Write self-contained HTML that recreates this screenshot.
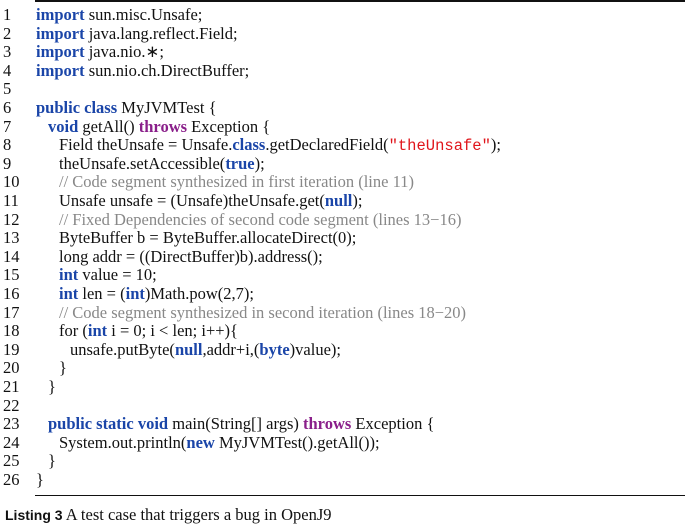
<!DOCTYPE html>
<html><head><meta charset="utf-8"><style>
body{margin:0;width:685px;height:523px;background:#fff;position:relative;overflow:hidden;font-family:"Liberation Serif",serif;font-size:16.5px;color:#111}
.t{position:absolute;left:35px;right:0;top:0;height:2px;background:#111}
.b{position:absolute;left:35px;right:0;top:495px;height:1.3px;background:#111}
.l{position:absolute;left:0;height:18.6px;line-height:18.6px;white-space:pre}
.n{position:absolute;left:3px}
.c{position:absolute;left:36px}
.i1{left:48px}.i2{left:59px}.i3{left:70px}
.k{color:#1a45a8;font-weight:bold}
.p{color:#8a1f8a;font-weight:bold}
.s{color:#e0151b;font-family:"Liberation Mono",monospace;font-size:15.5px}
.g{color:#888}
.cap{position:absolute;left:5px;top:505px;font-size:16.5px;line-height:19px}
.cap b{font-family:"Liberation Sans",sans-serif;font-size:14px;font-weight:bold}
</style></head><body>
<div class="t"></div>
<div class="l" style="top:6px"><span class="n">1</span><span class="c"><span class="k">import</span> sun.misc.Unsafe;</span></div>
<div class="l" style="top:24.6px"><span class="n">2</span><span class="c"><span class="k">import</span> java.lang.reflect.Field;</span></div>
<div class="l" style="top:43.2px"><span class="n">3</span><span class="c"><span class="k">import</span> java.nio.∗;</span></div>
<div class="l" style="top:61.8px"><span class="n">4</span><span class="c"><span class="k">import</span> sun.nio.ch.DirectBuffer;</span></div>
<div class="l" style="top:80.4px"><span class="n">5</span></div>
<div class="l" style="top:99px"><span class="n">6</span><span class="c"><span class="k">public class</span> MyJVMTest {</span></div>
<div class="l" style="top:117.6px"><span class="n">7</span><span class="c i1"><span class="k">void</span> getAll() <span class="p">throws</span> Exception {</span></div>
<div class="l" style="top:136.2px"><span class="n">8</span><span class="c i2">Field theUnsafe = Unsafe.<span class="k">class</span>.getDeclaredField(<span class="s">"theUnsafe"</span>);</span></div>
<div class="l" style="top:154.8px"><span class="n">9</span><span class="c i2">theUnsafe.setAccessible(<span class="k">true</span>);</span></div>
<div class="l" style="top:173.4px"><span class="n">10</span><span class="c i2 g">// Code segment synthesized in first iteration (line 11)</span></div>
<div class="l" style="top:192px"><span class="n">11</span><span class="c i2">Unsafe unsafe = (Unsafe)theUnsafe.get(<span class="k">null</span>);</span></div>
<div class="l" style="top:210.6px"><span class="n">12</span><span class="c i2 g">// Fixed Dependencies of second code segment (lines 13−16)</span></div>
<div class="l" style="top:229.2px"><span class="n">13</span><span class="c i2">ByteBuffer b = ByteBuffer.allocateDirect(0);</span></div>
<div class="l" style="top:247.8px"><span class="n">14</span><span class="c i2">long addr = ((DirectBuffer)b).address();</span></div>
<div class="l" style="top:266.4px"><span class="n">15</span><span class="c i2"><span class="k">int</span> value = 10;</span></div>
<div class="l" style="top:285px"><span class="n">16</span><span class="c i2"><span class="k">int</span> len = (<span class="k">int</span>)Math.pow(2,7);</span></div>
<div class="l" style="top:303.6px"><span class="n">17</span><span class="c i2 g">// Code segment synthesized in second iteration (lines 18−20)</span></div>
<div class="l" style="top:322.2px"><span class="n">18</span><span class="c i2">for (<span class="k">int</span> i = 0; i &lt; len; i++){</span></div>
<div class="l" style="top:340.8px"><span class="n">19</span><span class="c i3">unsafe.putByte(<span class="k">null</span>,addr+i,(<span class="k">byte</span>)value);</span></div>
<div class="l" style="top:359.4px"><span class="n">20</span><span class="c i2">}</span></div>
<div class="l" style="top:378px"><span class="n">21</span><span class="c i1">}</span></div>
<div class="l" style="top:396.6px"><span class="n">22</span></div>
<div class="l" style="top:415.2px"><span class="n">23</span><span class="c i1"><span class="k">public static void</span> main(String[] args) <span class="p">throws</span> Exception {</span></div>
<div class="l" style="top:433.8px"><span class="n">24</span><span class="c i2">System.out.println(<span class="k">new</span> MyJVMTest().getAll());</span></div>
<div class="l" style="top:452.4px"><span class="n">25</span><span class="c i1">}</span></div>
<div class="l" style="top:471px"><span class="n">26</span><span class="c">}</span></div>
<div class="b"></div>
<div class="cap"><b>Listing 3</b> A test case that triggers a bug in OpenJ9</div>
</body></html>
